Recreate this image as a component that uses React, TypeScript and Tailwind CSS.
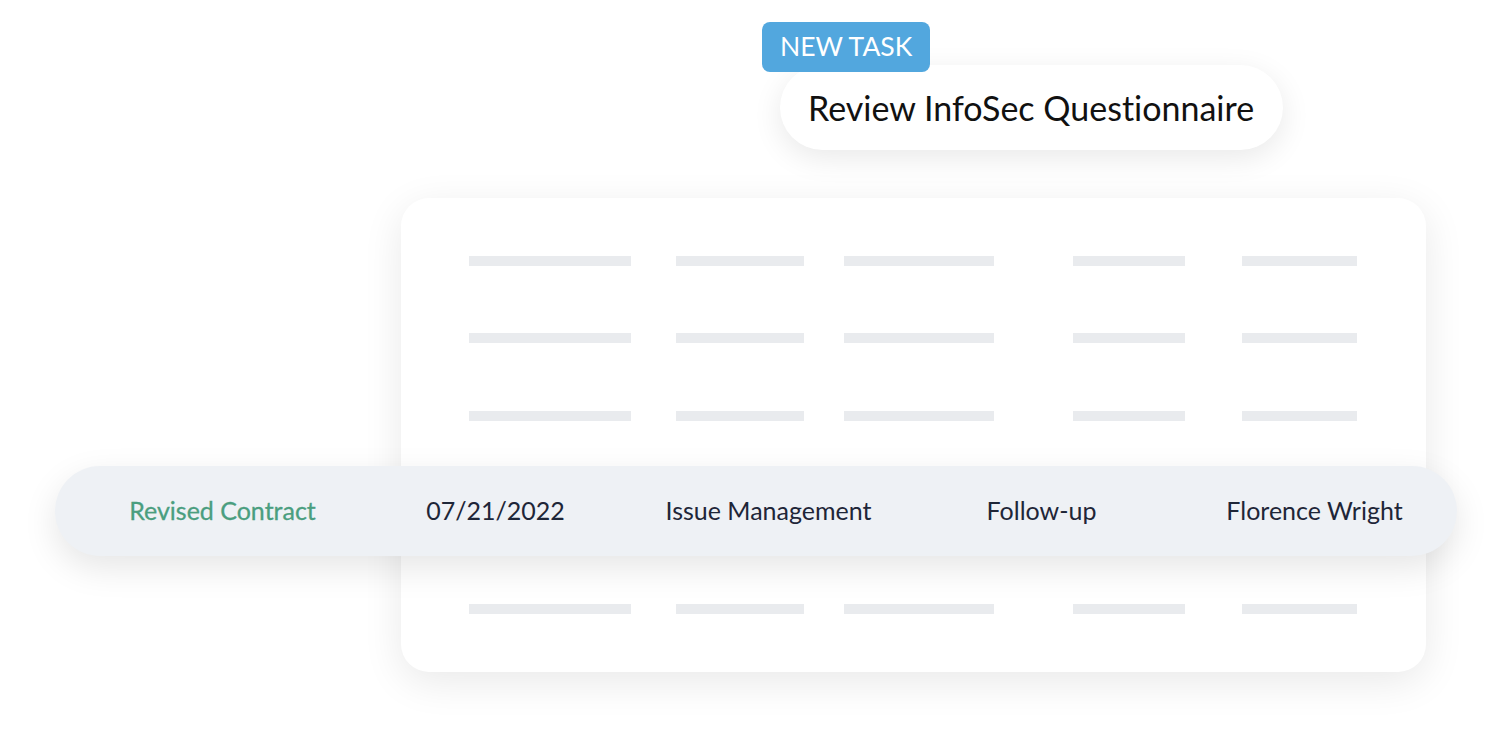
import React from 'react';

const cols = [
  { w: 'w-[162px]', ml: 'ml-0' },
  { w: 'w-[128px]', ml: 'ml-[45px]' },
  { w: 'w-[150px]', ml: 'ml-[40px]' },
  { w: 'w-[112px]', ml: 'ml-[79px]' },
  { w: 'w-[115px]', ml: 'ml-[57px]' },
];

function BarRow({ className }: { className: string }) {
  return (
    <div className={`flex pl-[68px] ${className}`}>
      {cols.map((c, i) => (
        <div key={i} className={`h-[10px] bg-[#e9ebee] ${c.w} ${c.ml}`} />
      ))}
    </div>
  );
}

const cells = ['Revised Contract', '07/21/2022', 'Issue Management', 'Follow-up', 'Florence Wright'];

export default function App() {
  return (
    <main
      className="relative w-full h-[738px] bg-white overflow-hidden [font-variant-ligatures:none]"
      style={{ fontFamily: 'Lato, "Open Sans", sans-serif' }}
    >
      {/* ───────── new task callout ───────── */}
      <div className="relative ml-[762px] pt-[22px] w-fit">
        <div className="relative z-10 inline-flex h-[50px] items-center rounded-lg bg-[#52a7de] px-[18px] text-[26.5px] text-white">
          NEW TASK
        </div>
        <div className="ml-[18px] -mt-[7px] flex h-[85px] w-[503px] items-center rounded-full bg-white pl-[28px] text-[34px] text-[#111111] shadow-[0_8px_30px_rgba(0,0,0,0.09)]">
          Review InfoSec Questionnaire
        </div>
      </div>

      {/* ───────── table card ───────── */}
      <div className="ml-[401px] mt-[48px] h-[474px] w-[1025px] rounded-[28px] bg-white shadow-[0_10px_40px_rgba(0,0,0,0.09)]">
        <BarRow className="pt-[58px]" />
        <BarRow className="mt-[67px]" />
        <BarRow className="mt-[68px]" />
        <BarRow className="mt-[183px]" />
      </div>

      {/* ───────── highlighted row ───────── */}
      <div className="absolute left-[55px] top-[466px] grid h-[90px] w-[1402px] grid-cols-5 items-center rounded-full bg-[#eef1f5] pl-[31px] pr-[6px] text-[25px] text-[#1e2638] shadow-[0_12px_34px_rgba(0,0,0,0.1)]">
        {cells.map((c, i) => (
          <div key={c} className={`text-center ${i === 0 ? 'text-[#4a9e7f] [-webkit-text-stroke:0.3px_#4a9e7f]' : ''}`}>
            {c}
          </div>
        ))}
      </div>
    </main>
  );
}
